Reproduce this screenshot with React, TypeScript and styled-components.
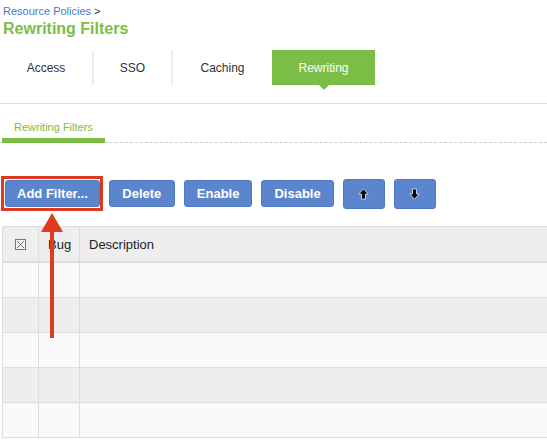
import React from "react";
import styled, { createGlobalStyle } from "styled-components";

const GREEN = "#7cbd45";
const BLUE = "#5b86cd";
const RED = "#de3a20";

const GlobalStyle = createGlobalStyle`
  html, body {
    margin: 0;
    padding: 0;
    background: #fff;
  }
  body {
    font-family: "Liberation Sans", Arial, sans-serif;
    color: #333;
  }
`;

const Page = styled.div`
  position: relative;
  width: 547px;
  height: 443px;
  overflow: hidden;
`;

const Breadcrumb = styled.div`
  padding: 4px 0 0 3px;
  font-size: 11px;
  line-height: 14px;
  color: #333;

  a {
    color: #4a78c6;
    text-decoration: none;
  }
`;

const Title = styled.h1`
  margin: 2px 0 0 3px;
  font-size: 16px;
  line-height: 18px;
  font-weight: bold;
  color: ${GREEN};
`;

const Tabs = styled.div`
  display: flex;
  margin-top: 12px;
  height: 35px;
`;

const Tab = styled.div<{ $active?: boolean; $last?: boolean; $w: number }>`
  position: relative;
  box-sizing: border-box;
  display: flex;
  align-items: center;
  justify-content: center;
  width: ${(p) => p.$w}px;
  font-size: 12px;
  color: ${(p) => (p.$active ? "#fff" : "#333")};
  background: ${(p) => (p.$active ? GREEN : "transparent")};
  border-right: ${(p) => (p.$active || p.$last ? "none" : "2px solid #eee")};

  ${(p) =>
    p.$active &&
    `
    &::after {
      content: "";
      position: absolute;
      left: 50%;
      bottom: -5px;
      margin-left: -5px;
      border-left: 5px solid transparent;
      border-right: 5px solid transparent;
      border-top: 5px solid ${GREEN};
    }
  `}
`;

const Divider = styled.hr`
  margin: 18px 0 0;
  border: none;
  border-top: 1px solid #ddd;
`;

const SubTabs = styled.div`
  display: flex;
  margin-top: 17px;
  border-bottom: 1px dashed #ccc;
`;

const SubTab = styled.div`
  width: 91px;
  margin-left: 2px;
  margin-bottom: -1px;
  padding: 0 0 4px 12px;
  font-size: 11px;
  line-height: 13px;
  color: ${GREEN};
  border-bottom: 5px solid ${GREEN};
`;

const Toolbar = styled.div`
  display: flex;
  align-items: center;
  gap: 9px;
  margin-top: 33px;
  padding-left: 1px;
`;

const Highlight = styled.div`
  display: flex;
  border: 3px solid ${RED};
  padding: 1px 0 1px 1px;
  margin-right: -3px;
`;

const Button = styled.button<{ $pad?: number; $tall?: boolean }>`
  display: flex;
  align-items: center;
  justify-content: center;
  box-sizing: border-box;
  height: ${(p) => (p.$tall ? 30 : 27)}px;
  width: ${(p) => (p.$tall ? "42px" : "auto")};
  padding: 0 ${(p) => p.$pad ?? 12}px;
  border: 1px solid #5079c0;
  border-radius: 3px;
  background: ${BLUE};
  color: #fff;
  font-family: "Liberation Sans", Arial, sans-serif;
  font-size: 13px;
  font-weight: bold;
  cursor: pointer;
`;

const Table = styled.table`
  margin: 15px 0 0 2px;
  width: 560px;
  table-layout: fixed;
  border-collapse: collapse;
  font-size: 13px;
  color: #222;

  th,
  td {
    height: 34px;
    padding: 0 9px;
    border: 1px solid #ddd;
    text-align: left;
    font-weight: normal;
  }

  th {
    background: #eee;
    border-bottom: 2px solid #ddd;
  }

  tbody tr:nth-child(odd) td {
    background: #fafafa;
  }
  tbody tr:nth-child(even) td {
    background: #eee;
  }
`;

const CheckCol = styled.th`
  width: 35px;
  padding: 0 !important;
`;

const BugCol = styled.th`
  width: 31px;
  padding: 0 0 0 9px !important;
`;

const Pointer = styled.svg`
  position: absolute;
  left: 38px;
  top: 211px;
  pointer-events: none;
`;

const CheckAllIcon = () => (
  <svg width="11" height="11" viewBox="0 0 11 11" style={{ display: "block", margin: "0 auto" }}>
    <rect x="0.5" y="0.5" width="10" height="10" fill="#f4f4f4" stroke="#777" />
    <path d="M2 2 L9 9 M9 2 L2 9" stroke="#777" strokeWidth="1" />
  </svg>
);

const MoveIcon = ({ down }: { down?: boolean }) => (
  <svg width="11" height="12" viewBox="0 0 11 12" style={down ? { transform: "rotate(180deg)" } : undefined}>
    <path d="M5.5 0.8 L10.2 6 L7.5 6 L7.5 11 L3.5 11 L3.5 6 L0.8 6 Z" fill="#000" stroke="#e8eefa" strokeWidth="0.8" />
  </svg>
);

const tabs = [
  { label: "Access", w: 94 },
  { label: "SSO", w: 79 },
  { label: "Caching", w: 99 },
  { label: "Rewriting", w: 103, active: true },
];

const rows = [0, 1, 2, 3, 4];

export default function App() {
  return (
    <Page>
      <GlobalStyle />
      <Breadcrumb>
        <a href="#">Resource Policies</a> &gt;
      </Breadcrumb>
      <Title>Rewriting Filters</Title>

      <Tabs>
        {tabs.map((t, i) => (
          <Tab key={t.label} $w={t.w} $active={t.active} $last={i === tabs.length - 2}>
            {t.label}
          </Tab>
        ))}
      </Tabs>
      <Divider />

      <SubTabs>
        <SubTab>Rewriting Filters</SubTab>
      </SubTabs>

      <Toolbar>
        <Highlight>
          <Button $pad={11}>Add Filter...</Button>
        </Highlight>
        <Button $pad={12.5}>Delete</Button>
        <Button>Enable</Button>
        <Button>Disable</Button>
        <Button $tall>
          <MoveIcon />
        </Button>
        <Button $tall>
          <MoveIcon down />
        </Button>
      </Toolbar>

      <Table>
        <thead>
          <tr>
            <CheckCol>
              <CheckAllIcon />
            </CheckCol>
            <BugCol>Bug</BugCol>
            <th>Description</th>
          </tr>
        </thead>
        <tbody>
          {rows.map((r) => (
            <tr key={r}>
              <td />
              <td />
              <td />
            </tr>
          ))}
        </tbody>
      </Table>

      <Pointer width="28" height="130" viewBox="0 0 28 130">
        <path d="M14 2 L25 21 L16 21 L16 127 L12 127 L12 21 L3 21 Z" fill={RED} />
      </Pointer>
    </Page>
  );
}
